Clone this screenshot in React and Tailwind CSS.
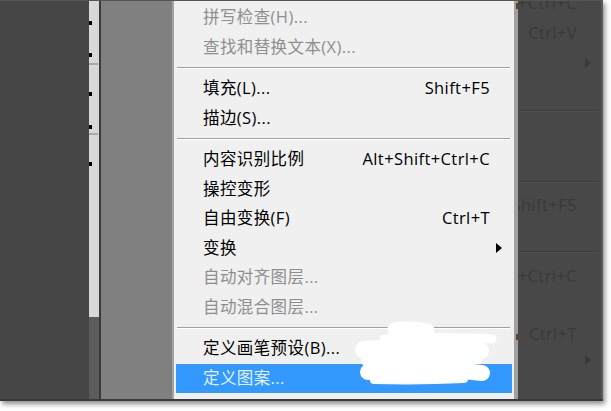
import React from 'react';

const font = "font-['Open_Sans','Noto_Sans_CJK_SC',sans-serif]";

const items = [
  { label: '拼写检查(H)...', off: true },
  { label: '查找和替换文本(X)...', off: true },
  { sep: true },
  { label: '填充(L)...', key: 'Shift+F5' },
  { label: '描边(S)...' },
  { sep: true },
  { label: '内容识别比例', key: 'Alt+Shift+Ctrl+C' },
  { label: '操控变形' },
  { label: '自由变换(F)', key: 'Ctrl+T' },
  { label: '变换', sub: true },
  { label: '自动对齐图层...', off: true },
  { label: '自动混合图层...', off: true },
  { sep: true },
  { label: '定义画笔预设(B)...' },
  { label: '定义图案...', hot: true },
];

function Arrow({ color = '#000' }) {
  return (
    <svg width="6" height="10" viewBox="0 0 6 10">
      <path d="M0 0 L6 5 L0 10 Z" fill={color} />
    </svg>
  );
}

function MenuRow({ item }) {
  if (item.sep) {
    return (
      <div className="h-[12px] flex items-center pl-[3px] pr-[4px]">
        <div className="w-full border-t border-[#a0a0a0] border-b border-b-white" />
      </div>
    );
  }
  const color = item.hot ? 'text-[#e2f0ff]' : item.off ? 'text-[#8e8e8e]' : 'text-black';
  return (
    <div className={`h-[29.5px] flex items-center ${item.hot ? 'bg-[#3399ff] mx-[2px] pl-[27px]' : 'pl-[29px]'}`}>
      <span className={`flex-1 whitespace-nowrap ${color}`}>{item.label}</span>
      {item.key && <span className={`whitespace-nowrap ${color}`}>{item.key}</span>}
      <span className="w-[24px] flex items-center pl-[6px]">{item.sub && <Arrow />}</span>
    </div>
  );
}

function DimRow({ h, text, arrow }) {
  return (
    <div className={`${h} flex items-center justify-end shrink-0`}>
      {text && <span className="whitespace-nowrap shrink-0 text-[#3a3a3a]">{text}</span>}
      <span className="w-[24px] shrink-0 flex items-center pl-[8px]">{arrow && <Arrow color="#3a3a3a" />}</span>
    </div>
  );
}

function DimSep() {
  return <div className="h-[2px] shrink-0 ml-[1px] mr-[3px] border-t border-[#3d3d3d] border-b border-b-[#505050]" />;
}

export default function App() {
  return (
    <div className={`w-[611px] h-[411px] bg-white overflow-hidden ${font} text-[16.5px] tracking-[0.4px]`}>
      <div className="w-[603px] h-[401px] flex border-t border-[#555] border-b-2 border-b-[#3a3a3a] shadow-[2px_3px_5px_rgba(0,0,0,0.45)] overflow-hidden">
        <div className="w-[89px] bg-[#464646]" />

        <div className="w-[10px] flex flex-col">
          <div className="h-[316px] bg-[#d8d8d8] flex flex-col">
            <div className="mt-[20px] w-[3px] h-[4px] bg-black" />
            <div className="mt-[28px] w-[3px] h-[4px] bg-black" />
            <div className="mt-[6px] w-[9px] h-[2px] bg-[#a8a8a8]" />
            <div className="mt-[27px] w-[3px] h-[4px] bg-black" />
            <div className="mt-[29px] w-[3px] h-[4px] bg-black" />
            <div className="mt-[4px] w-[9px] h-[2px] bg-[#a8a8a8]" />
            <div className="mt-[27px] w-[3px] h-[4px] bg-black" />
          </div>
          <div className="flex-1 bg-[#5c5c5c]" />
        </div>

        <div className="w-[2px] bg-[#3a3a3a]" />
        <div className="w-[71px] bg-[#808080]" />

        <div className="w-[346px] bg-[#f0f0f0] border-l-2 border-l-[#a2a2a2] border-r-4 border-r-[#a0a0a0] flex flex-col pt-[2px] relative">
          {items.map((item, i) => (
            <MenuRow key={i} item={item} />
          ))}
          <span className="absolute right-[-4px] top-[2px] w-[2px] h-[6px] bg-[#6b3f1c]" />
          <span className="absolute right-[-4px] top-[333px] w-[2px] h-[6px] bg-[#6b3f1c]" />
          <svg className="absolute left-[180px] top-[316px]" width="165" height="75" viewBox="0 0 165 75">
            <g stroke="#ffffff" strokeLinecap="round" fill="none">
              <path d="M40 12 C50 10 62 11 74 13" strokeWidth="13" />
              <path d="M30 22 C60 20 110 20 138 22" strokeWidth="9" />
              <path d="M10 33 C50 30 100 31 126 34" strokeWidth="18" />
              <path d="M12 44 C60 46 100 44 124 42" strokeWidth="10" />
              <path d="M14 55 C60 52 100 53 128 56" strokeWidth="16" />
              <path d="M20 63 C60 64 90 63 110 62" strokeWidth="8" />
            </g>
          </svg>
        </div>

        <div className="flex-1 bg-[#484848] flex flex-col overflow-hidden">
          <div className="-mt-[13px]" />
          <DimRow h="h-[30px]" text="Shift+Ctrl+C" />
          <DimRow h="h-[30px]" text="Ctrl+V" />
          <DimRow h="h-[30px]" arrow />
          <div className="h-[32px] shrink-0" />
          <DimSep />
          <div className="h-[69px] shrink-0" />
          <DimSep />
          <div className="h-[7px] shrink-0" />
          <DimRow h="h-[30px]" text="Shift+F5" />
          <div className="h-[31px] shrink-0" />
          <DimSep />
          <div className="h-[8px] shrink-0" />
          <DimRow h="h-[30px]" text="Alt+Shift+Ctrl+C" />
          <div className="h-[28px] shrink-0" />
          <DimRow h="h-[30px]" text="Ctrl+T" />
          <DimRow h="h-[22px]" arrow />
        </div>
        <div className="w-[2px] bg-[#5a5a5a]" />
      </div>
    </div>
  );
}
